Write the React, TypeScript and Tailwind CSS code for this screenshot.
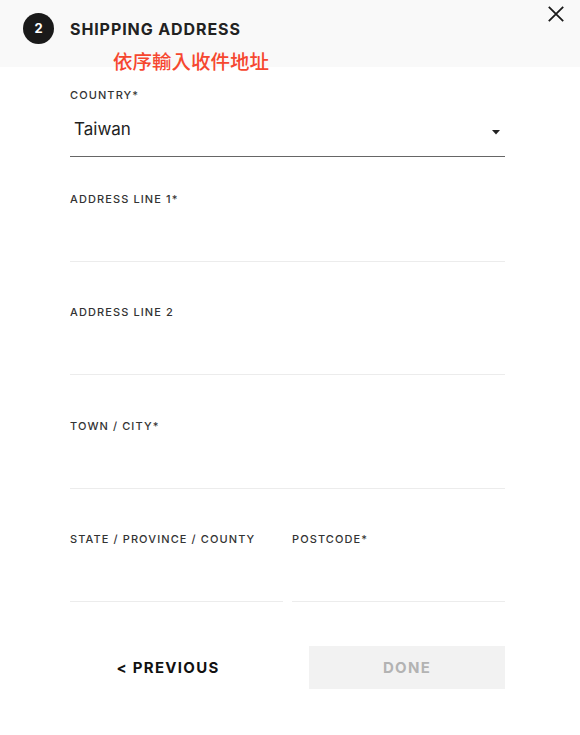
const font = { fontFamily: "Inter, 'Noto Sans CJK TC', sans-serif" };

const Label = ({ text }: { text: string }) => (
  <p className="h-[14px] text-[11px] leading-[14px] font-medium tracking-[1.1px] text-[#333]">{text}</p>
);

const Field = ({ label, className = "" }: { label: string; className?: string }) => (
  <div className={className}>
    <Label text={label} />
    <div className="h-[56px] border-b border-[#ececec]" />
  </div>
);

export default function App() {
  return (
    <div className="relative w-[580px] h-[735px] bg-white" style={font}>
      <header className="flex items-start h-[67px] bg-[#f9f9f9] pl-[23px] pt-[13px]">
        <div className="flex items-center justify-center w-[31px] h-[31px] rounded-full bg-[#1a1a1a] text-white text-[13px] font-bold">
          2
        </div>
        <h1 className="ml-[16px] mt-[5px] text-[16px] leading-[22px] font-bold tracking-[0.9px] text-[#222]">
          SHIPPING ADDRESS
        </h1>
        <button className="absolute left-[548px] top-[6px]">
          <svg width="16" height="16" viewBox="0 0 16 16">
            <path d="M0.8 0.8l14.4 14.4M15.2 0.8l-14.4 14.4" stroke="#1a1a1a" strokeWidth="1.8" />
          </svg>
        </button>
      </header>

      <p className="absolute left-[113px] top-[50px] text-[19.5px] leading-[24px] font-medium text-[#f6472f]">
        依序輸入收件地址
      </p>

      <form className="pl-[70px] pr-[75px] pt-[21px]">
        <Label text="COUNTRY*" />
        <div className="flex items-center justify-between h-[55px] border-b border-[#666] pl-[4px] pr-[5px]">
          <span className="text-[17px] text-[#222] mt-[1px]">Taiwan</span>
          <svg width="8" height="5" viewBox="0 0 8 5" className="mt-[6px]">
            <path d="M0 0h8L4 4.5z" fill="#222" />
          </svg>
        </div>

        <Field label="ADDRESS LINE 1*" className="mt-[35px]" />
        <Field label="ADDRESS LINE 2" className="mt-[43px]" />
        <Field label="TOWN / CITY*" className="mt-[44px]" />

        <div className="grid grid-cols-2 gap-[9px] mt-[43px]">
          <Field label="STATE / PROVINCE / COUNTY" />
          <Field label="POSTCODE*" />
        </div>

        <div className="grid grid-cols-2 gap-[43px] mt-[44px]">
          <button type="button" className="h-[43px] pt-[1px] text-[15px] font-bold tracking-[1.3px] text-[#111]">
            &lt; PREVIOUS
          </button>
          <button type="button" className="h-[43px] pt-[1px] bg-[#f2f2f2] text-[15px] font-bold tracking-[1.3px] text-[#b3b3b3]">
            DONE
          </button>
        </div>
      </form>
    </div>
  );
}
